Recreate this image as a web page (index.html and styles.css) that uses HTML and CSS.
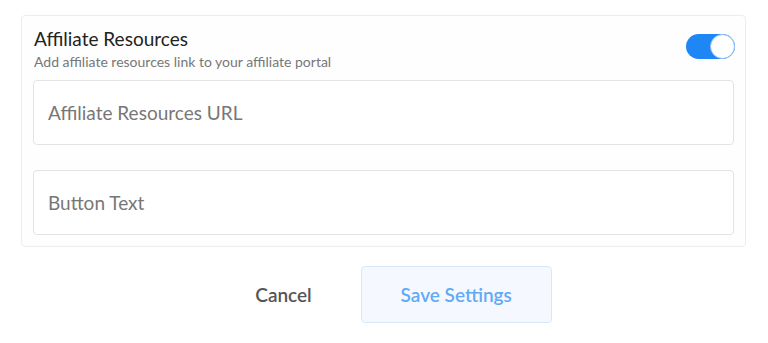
FILE: index.html
```html
<!DOCTYPE html>
<html lang="en">
<head>
    <meta charset="UTF-8">
    <meta name="viewport" content="width=device-width, initial-scale=1.0">
    <title>Affiliate Resources</title>
    <link rel="stylesheet" href="styles.css">
</head>
<body>
    <section class="card">
        <div class="card-head">
            <div>
                <h3 class="card-title">Affiliate Resources</h3>
                <p class="card-sub">Add affiliate resources link to your affiliate portal</p>
            </div>
            <label class="switch">
                <input type="checkbox" checked>
                <span class="knob"></span>
            </label>
        </div>

        <input class="field" type="text" placeholder="Affiliate Resources URL">
        <input class="field" type="text" placeholder="Button Text">
    </section>

    <div class="actions">
        <button class="btn btn-cancel">Cancel</button>
        <button class="btn btn-save">Save Settings</button>
    </div>
</body>
</html>
```

FILE: styles.css
```css
body{
    margin: 0;
    padding: 15px 22px 0 21px;
    font-family: Lato, "Open Sans", sans-serif;
    background-color: #fff;
}

.card{
    border: 1px solid #ededed;
    border-radius: 4px;
    background-color: #fefefe;
    padding: 11px 11px 11px 11px;
    display: flex;
    flex-direction: column;
    gap: 25px;
}

.card-head{
    display: flex;
    align-items: center;
    justify-content: space-between;
    margin-bottom: -15px;
}

.card-title{
    margin: 0;
    font-size: 19px;
    line-height: 23px;
    font-weight: 400;
    color: #222;
    padding-left: 1px;
}
.card-sub{
    margin: 3px 0 0 1px;
    font-size: 14px;
    line-height: 17px;
    color: #777;
}

.switch{
    position: relative;
    width: 49px;
    height: 25px;
    margin-right: -1px;
    margin-top: -4px;
}
.switch input{
    display: none;
}
.switch .knob{
    position: absolute;
    inset: 0;
    border-radius: 13px;
    background-color: #1e87f5;
}
.switch .knob::after{
    content: "";
    position: absolute;
    top: 0;
    right: 0;
    width: 23px;
    height: 23px;
    border-radius: 50%;
    background-color: #fff;
    border: 1px solid #8cc0f8;
}

.field{
    display: block;
    width: 100%;
    box-sizing: border-box;
    height: 65px;
    border: 1px solid #e3e3e3;
    border-radius: 4px;
    background-color: #fff;
    padding: 0 14px;
    font-family: Lato, "Open Sans", sans-serif;
    font-size: 19px;
    color: #333;
}
.field::placeholder{
    color: #777;
}

.actions{
    display: flex;
    justify-content: center;
    gap: 9px;
    margin-top: 19px;
}

.btn{
    font-family: Lato, "Open Sans", sans-serif;
    font-size: 19px;
    font-weight: 600;
    height: 57px;
    border-radius: 4px;
    cursor: pointer;
}
.btn-cancel{
    background: none;
    border: none;
    color: #555;
    padding: 0 40px;
}
.btn-save{
    width: 191px;
    background-color: #f5f9ff;
    border: 1px solid #d8e8fb;
    color: #62a9f6;
}
```
